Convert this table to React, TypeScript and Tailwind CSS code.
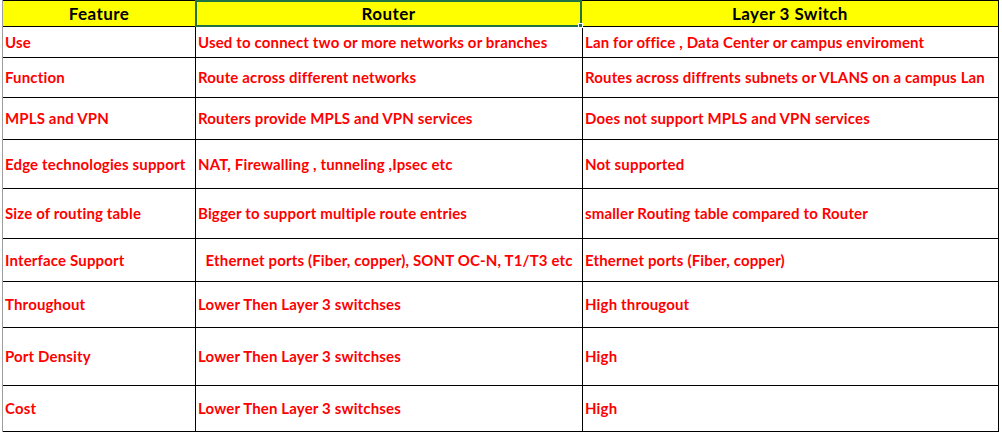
const rows: { h: string; cells: [string, string, string] }[] = [
  { h: 'h-[31px]', cells: ['Use', 'Used to connect two or more networks or branches', 'Lan for office , Data Center or campus enviroment'] },
  { h: 'h-[40px]', cells: ['Function', 'Route across different networks', 'Routes across diffrents subnets or VLANS on a campus Lan'] },
  { h: 'h-[42px]', cells: ['MPLS and VPN', 'Routers provide MPLS and VPN services', 'Does not support MPLS and VPN services'] },
  { h: 'h-[49px]', cells: ['Edge technologies support', 'NAT, Firewalling , tunneling ,Ipsec etc', 'Not supported'] },
  { h: 'h-[50px]', cells: ['Size of routing table', 'Bigger to support multiple route entries', 'smaller Routing table compared to Router'] },
  { h: 'h-[43px]', cells: ['Interface Support', '\u00a0\u00a0Ethernet ports (Fiber, copper), SONT OC-N, T1/T3 etc', 'Ethernet ports (Fiber, copper)'] },
  { h: 'h-[46px]', cells: ['Throughout', 'Lower Then Layer 3 switchses', 'High througout'] },
  { h: 'h-[58px]', cells: ['Port Density', 'Lower Then Layer 3 switchses', 'High'] },
  { h: 'h-[46px]', cells: ['Cost', 'Lower Then Layer 3 switchses', 'High'] },
];

const cell = 'flex items-center border-b border-r border-black px-[2px] whitespace-nowrap overflow-hidden';

export default function App() {
  return (
    <div
      className="w-[1002px] h-[434px] bg-white overflow-hidden"
      style={{ fontFamily: 'Lato, "Liberation Sans", sans-serif' }}
    >
      <div className="ml-[2px] w-[997px] border-l border-[#9e9e9e] flex flex-col">
        {/* header */}
        <div className="flex h-[27px] text-[17px] tracking-[0.4px] font-bold text-black">
          <div className="w-[193px] bg-[#ffff00] border-t border-b border-r border-black flex items-center justify-center">
            Feature
          </div>
          <div className="relative w-[387px] bg-[#ffff00] border-2 border-[#217346] -ml-[1px] flex items-center justify-center">
            Router
            {/* fill handle */}
            <div className="absolute -right-[3px] -bottom-[3px] w-[5px] h-[5px] bg-[#217346] border border-white" />
          </div>
          <div className="w-[417px] bg-[#ffff00] border-t border-b border-r border-black flex items-center justify-center">
            Layer 3 Switch
          </div>
        </div>
        {/* body */}
        {rows.map((r) => (
          <div key={r.cells[0]} className={`flex ${r.h} text-[15px] tracking-[0.15px] font-bold text-[#ff0000]`}>
            <div className={`${cell} w-[193px]`}>{r.cells[0]}</div>
            <div className={`${cell} w-[387px]`}>{r.cells[1]}</div>
            <div className={`${cell} w-[416px]`}>{r.cells[2]}</div>
          </div>
        ))}
      </div>
    </div>
  );
}
